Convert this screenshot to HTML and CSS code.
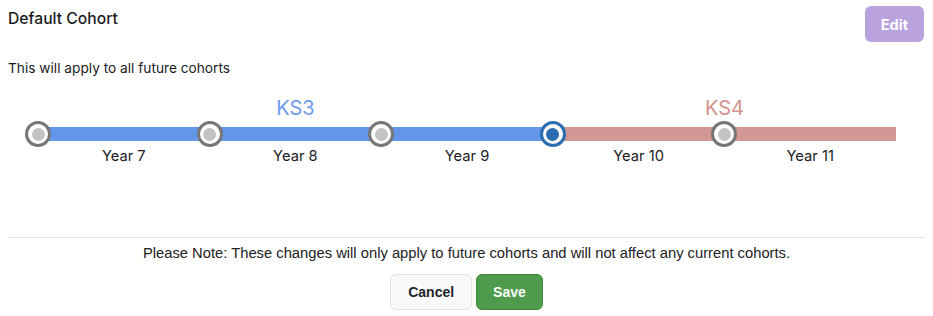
FILE: index.html
```html
<!DOCTYPE html>
<html lang="en">
<head>
  <meta charset="UTF-8">
  <title>Default Cohort</title>
  <link rel="stylesheet" href="styles.css">
</head>
<body>
  <div class="panel">
    <div class="header">
      <h1>Default Cohort</h1>
      <button class="edit-btn">Edit</button>
    </div>
    <div class="subtitle">This will apply to all future cohorts</div>

    <div class="timeline">
      <div class="stages">
        <div class="stage ks3">KS3</div>
        <div class="stage ks4">KS4</div>
      </div>
      <div class="years">
        <div class="year ks3"><span class="node"></span><div class="bar"></div><div class="label">Year 7</div></div>
        <div class="year ks3"><span class="node"></span><div class="bar"></div><div class="label">Year 8</div></div>
        <div class="year ks3"><span class="node"></span><div class="bar"></div><div class="label">Year 9</div></div>
        <div class="year ks4"><span class="node active"></span><div class="bar"></div><div class="label">Year 10</div></div>
        <div class="year ks4"><span class="node"></span><div class="bar"></div><div class="label">Year 11</div></div>
      </div>
    </div>

    <div class="footer">
      <p class="note">Please Note: These changes will only apply to future cohorts and will not affect any current cohorts.</p>
      <div class="actions">
        <button class="btn cancel">Cancel</button>
        <button class="btn save">Save</button>
      </div>
    </div>
  </div>
</body>
</html>
```

FILE: styles.css
```css
body {
  margin: 0;
  background: #fff;
  color: #1b1b1f;
  font-family: Inter, 'Noto Sans', sans-serif;
}

.panel {
  padding: 6px 8px 0 8px;
}

.header {
  display: flex;
  justify-content: space-between;
  align-items: flex-start;
  padding-right: 1px;
}

h1 {
  margin: 2px 0 0;
  font-size: 15.7px;
  line-height: 21px;
  font-weight: 500;
}

.edit-btn {
  height: 36px;
  padding: 0 16px;
  background-color: #b9a2dd;
  color: #fff;
  border: none;
  border-radius: 6px;
  font-family: Inter, sans-serif;
  font-size: 14.5px;
  font-weight: 700;
}

.subtitle {
  margin-top: 17px;
  font-size: 13.7px;
  line-height: 19px;
}

.timeline {
  margin: 18px 29px 0 30px;
}

.stages {
  display: grid;
  grid-template-columns: repeat(5, 1fr);
  height: 25px;
  margin-bottom: 6px;
}

.stage {
  text-align: center;
  font-size: 20px;
  line-height: 25px;
}

.stage.ks3 {
  grid-column: span 3;
  color: #6f9be9;
}

.stage.ks4 {
  grid-column: span 2;
  color: #d4928f;
}

.years {
  display: flex;
}

.year {
  flex: 1;
  position: relative;
}

.bar {
  height: 14px;
}

.year.ks3 .bar {
  background-color: #6396e8;
}

.year.ks4 .bar {
  background-color: #d39795;
}

.label {
  margin-top: 6px;
  text-align: center;
  font-size: 14.7px;
  line-height: 19px;
}

.node {
  position: absolute;
  left: -13px;
  top: -6px;
  width: 26px;
  height: 26px;
  box-sizing: border-box;
  border: 3px solid #767676;
  border-radius: 50%;
  background-color: #fff;
  display: flex;
  align-items: center;
  justify-content: center;
  z-index: 1;
}

.node::after {
  content: "";
  width: 13px;
  height: 13px;
  border-radius: 50%;
  background-color: #c3c3c3;
}

.node.active {
  border-color: #2a6cb0;
}

.node.active::after {
  background-color: #2a6cb0;
}

.footer {
  margin-top: 71px;
  border-top: 1px solid #e5e5e5;
  text-align: center;
  font-family: 'Liberation Sans', Arial, sans-serif;
}

.note {
  margin: 6px 0 0;
  font-size: 14.75px;
  line-height: 18px;
  color: #222;
}

.actions {
  display: flex;
  justify-content: center;
  gap: 4px;
  margin-top: 12px;
}

.btn {
  height: 36px;
  border-radius: 6px;
  font-family: 'Liberation Sans', Arial, sans-serif;
  font-size: 14px;
  font-weight: 700;
}

.cancel {
  padding: 0 17px;
  background-color: #f8f9fa;
  border: 1px solid #e2e3e5;
  color: #212529;
}

.save {
  padding: 0 16px;
  background-color: #4e9b4b;
  border: 1px solid #3f8b3d;
  color: #fff;
}
```
